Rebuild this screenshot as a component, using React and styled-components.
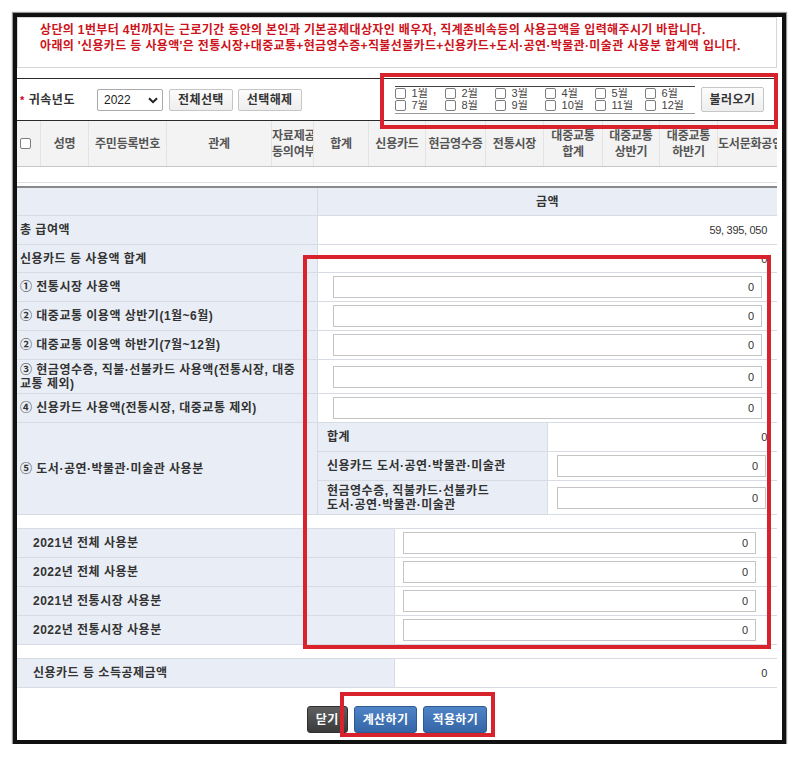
import React from "react";
import styled, { createGlobalStyle } from "styled-components";

const kr = `"Liberation Sans", "Noto Sans CJK KR", "Noto Sans", sans-serif`;
const num = `"Liberation Sans", Arial, sans-serif`;

const GlobalStyle = createGlobalStyle`
  html, body { margin: 0; padding: 0; background: #fff; }
  body { font-family: ${kr}; color: #333; }
  * { box-sizing: border-box; }
`;

const Frame = styled.div`
  position: relative;
  margin: 13px 0 0 13px;
  width: 773px;
  border: 4px solid #111;
  padding: 0 5px 7px 0;
  background: #fff;
  box-shadow: 0 0 1px 1px rgba(0, 0, 0, 0.4);
`;

const Notice = styled.div`
  height: 51px;
  border: 1px solid #d6d6d6;
  padding: 4px 0 0 22px;
  color: #cc1420;
  font: bold 12px/16px ${kr};
  letter-spacing: 0.35px;
  white-space: nowrap;
`;

const Toolbar = styled.div`
  margin-top: 10px;
  height: 43px;
  border-top: 1px solid #2b2b2b;
  border-bottom: 1px solid #2b2b2b;
  display: flex;
  align-items: center;
`;

const YearLabel = styled.label`
  width: 80px;
  padding-left: 3px;
  display: flex;
  align-items: center;
  gap: 4px;
  font: bold 12px/16px ${kr};
  letter-spacing: 0.5px;
  color: #333;
`;

const Star = styled.span`
  color: #d0021b;
  font-size: 11px;
`;

const SelectWrap = styled.div`
  position: relative;
  width: 66px;
  height: 22px;
`;

const YearSelect = styled.select`
  appearance: none;
  width: 100%;
  height: 100%;
  border: 1px solid #a9a9a9;
  border-radius: 2px;
  background: #fff;
  padding: 0 0 0 6px;
  font: 12px ${num};
  color: #222;
`;

const Chevron = styled.svg`
  position: absolute;
  right: 5px;
  top: 8px;
  pointer-events: none;
`;

const GreyButton = styled.button`
  height: ${(p) => (p.$tall ? 25 : 22)}px;
  margin-left: ${(p) => p.$gap}px;
  padding: 0 8px;
  border: 1px solid #c6c6c6;
  border-radius: 2px;
  background: linear-gradient(#fcfcfc, #eeeeee);
  font: bold 12px/1 ${kr};
  letter-spacing: 0.4px;
  color: #333;
`;

const MonthGrid = styled.div`
  margin-left: 93px;
  width: 300px;
  padding: 1px 0;
  border-top: 1px solid #444;
  border-bottom: 1px solid #9a9a9a;
  display: grid;
  grid-template-columns: repeat(6, 50px);
`;

const Month = styled.label`
  height: 12px;
  display: flex;
  align-items: center;
  overflow: hidden;
  font: 11px/11px ${kr};
  color: #444;
`;

const Box = styled.span`
  flex: none;
  width: 11px;
  height: 11px;
  margin-right: ${(p) => p.$gap ?? 6}px;
  border: 1px solid #7d7d7d;
  border-radius: 2px;
  background: #fff;
`;

const cols = [23, 48, 78, 105, 42, 55, 57, 60, 58, 59, 57, 58, 60];

const HeadRow = styled.div`
  display: grid;
  grid-template-columns: ${cols.map((c) => c + "px").join(" ")};
  height: 46px;
  background: #f3f3f3;
  border-bottom: 1px solid #c9c9c9;
`;

const HeadCell = styled.div`
  display: flex;
  flex-direction: column;
  justify-content: center;
  align-items: ${(p) => (p.$check ? "flex-start" : "stretch")};
  padding-left: ${(p) => (p.$check ? 3 : 0)}px;
  overflow: hidden;
  white-space: nowrap;
  text-align: center;
  border-left: ${(p) => (p.$check ? "none" : "1px solid #e3e3e3")};
  font: bold 12px/16px ${kr};
  letter-spacing: -0.2px;
  color: #555;
`;

const EmptyRow = styled.div`
  height: 16px;
  border-bottom: 1px solid #e0e0e0;
`;

const Table = styled.div`
  margin-top: 3px;
  border-top: 2px solid #8a8a8a;
`;

const Row = styled.div`
  display: grid;
  grid-template-columns: ${(p) => p.$label}px 1fr;
  height: ${(p) => p.$h}px;
  border-bottom: 1px solid #d7dce4;
`;

const Label = styled.div`
  display: flex;
  align-items: center;
  padding-left: ${(p) => p.$indent}px;
  background: #e9eef6;
  border-right: 1px solid #d7dce4;
  font: bold 12px/14px ${kr};
  letter-spacing: 0.5px;
  color: #333;
  white-space: nowrap;
`;

const HeadValue = styled.div`
  display: flex;
  align-items: center;
  justify-content: center;
  background: #e9eef6;
  font: bold 12px/14px ${kr};
  letter-spacing: 0.5px;
  color: #333;
`;

const Value = styled.div`
  display: flex;
  align-items: center;
  justify-content: ${(p) => (p.$input ? "flex-start" : "flex-end")};
  padding: 0 10px 0 ${(p) => p.$padL ?? 15}px;
  font: 11px ${num};
  letter-spacing: -0.3px;
  color: #333;
`;

const Amount = styled.input`
  width: ${(p) => p.$w}px;
  height: 22px;
  padding: 0 7px;
  border: 1px solid #c4c4c4;
  background: #fff;
  text-align: right;
  font: 11px ${num};
  color: #333;
`;

const SubStack = styled.div`
  display: flex;
  flex-direction: column;
`;

const SubRow = styled.div`
  display: grid;
  grid-template-columns: 230px 1fr;
  height: ${(p) => p.$h}px;
  border-bottom: ${(p) => (p.$last ? "none" : "1px solid #d7dce4")};
`;

const Spacer = styled.div`
  height: 14px;
  border-bottom: 1px solid #d7dce4;
`;

const Actions = styled.div`
  margin-top: 18px;
  display: flex;
  justify-content: center;
  gap: 6px;
`;

const ActionButton = styled.button`
  height: 27px;
  padding: 0 8px;
  border-radius: 3px;
  border: 1px solid ${(p) => (p.$dark ? "#2f2f2f" : "#2c5a93")};
  background: ${(p) =>
    p.$dark ? "linear-gradient(#606060, #3a3a3a)" : "linear-gradient(#4f84c6, #3465a7)"};
  color: #fff;
  font: bold 12px/1 ${kr};
  letter-spacing: 0.4px;
`;

const Highlight = styled.div`
  position: absolute;
  left: ${(p) => p.$x}px;
  top: ${(p) => p.$y}px;
  width: ${(p) => p.$w}px;
  height: ${(p) => p.$h}px;
  border: 4px solid #d8232c;
  pointer-events: none;
`;

const headers = [
  "",
  "성명",
  "주민등록번호",
  "관계",
  ["자료제공", "동의여부"],
  "합계",
  "신용카드",
  "현금영수증",
  "전통시장",
  ["대중교통", "합계"],
  ["대중교통", "상반기"],
  ["대중교통", "하반기"],
  "도서문화공연",
];

const mainRows = [
  { label: "① 전통시장 사용액", h: 29 },
  { label: "② 대중교통 이용액 상반기(1월~6월)", h: 29 },
  { label: "② 대중교통 이용액 하반기(7월~12월)", h: 29 },
  { label: ["③ 현금영수증, 직불·선불카드 사용액(전통시장, 대중", "교통 제외)"], h: 34 },
  { label: "④ 신용카드 사용액(전통시장, 대중교통 제외)", h: 29 },
];

const yearRows = ["2021년 전체 사용분", "2022년 전체 사용분", "2021년 전통시장 사용분", "2022년 전통시장 사용분"];

const lines = (t) =>
  Array.isArray(t)
    ? t.map((s, i) => (
        <React.Fragment key={i}>
          {i > 0 && <br />}
          {s}
        </React.Fragment>
      ))
    : t;

export default function App() {
  return (
    <>
      <GlobalStyle />
      <Frame>
        <Notice>
          상단의 1번부터 4번까지는 근로기간 동안의 본인과 기본공제대상자인 배우자, 직계존비속등의 사용금액을 입력해주시기 바랍니다.
          <br />
          아래의 '신용카드 등 사용액'은 전통시장+대중교통+현금영수증+직불선불카드+신용카드+도서·공연·박물관·미술관 사용분 합계액 입니다.
        </Notice>

        <Toolbar>
          <YearLabel>
            <Star>*</Star>귀속년도
          </YearLabel>
          <SelectWrap>
            <YearSelect defaultValue="2022">
              <option>2022</option>
              <option>2021</option>
            </YearSelect>
            <Chevron width="10" height="7" viewBox="0 0 10 7">
              <path d="M1 1.2l4 4 4-4" fill="none" stroke="#222" strokeWidth="2" />
            </Chevron>
          </SelectWrap>
          <GreyButton $gap={6}>전체선택</GreyButton>
          <GreyButton $gap={5}>선택해제</GreyButton>
          <MonthGrid>
            {Array.from({ length: 12 }, (_, i) => (
              <Month key={i}>
                <Box />
                {i + 1}월
              </Month>
            ))}
          </MonthGrid>
          <GreyButton $gap={6} $tall>
            불러오기
          </GreyButton>
        </Toolbar>

        <HeadRow>
          {headers.map((h, i) => (
            <HeadCell key={i} $check={i === 0}>
              {i === 0 ? <Box $gap={0} /> : lines(h)}
            </HeadCell>
          ))}
        </HeadRow>
        <EmptyRow />

        <Table>
          <Row $label={301} $h={28}>
            <Label $indent={3} />
            <HeadValue>금액</HeadValue>
          </Row>
          <Row $label={301} $h={29}>
            <Label $indent={3}>총 급여액</Label>
            <Value>59, 395, 050</Value>
          </Row>
          <Row $label={301} $h={28}>
            <Label $indent={3}>신용카드 등 사용액 합계</Label>
            <Value>0</Value>
          </Row>
          {mainRows.map((r, i) => (
            <Row key={i} $label={301} $h={r.h}>
              <Label $indent={3}>
                <div>{lines(r.label)}</div>
              </Label>
              <Value $input>
                <Amount $w={429} defaultValue="0" />
              </Value>
            </Row>
          ))}
          <Row $label={301} $h={92}>
            <Label $indent={3}>⑤ 도서·공연·박물관·미술관 사용분</Label>
            <SubStack>
              <SubRow $h={29}>
                <Label $indent={9}>합계</Label>
                <Value>0</Value>
              </SubRow>
              <SubRow $h={29}>
                <Label $indent={9}>신용카드 도서·공연·박물관·미술관</Label>
                <Value $input $padL={9}>
                  <Amount $w={209} defaultValue="0" />
                </Value>
              </SubRow>
              <SubRow $h={33} $last>
                <Label $indent={9}>
                  <div>{lines(["현금영수증, 직불카드·선불카드", "도서·공연·박물관·미술관"])}</div>
                </Label>
                <Value $input $padL={9}>
                  <Amount $w={209} defaultValue="0" />
                </Value>
              </SubRow>
            </SubStack>
          </Row>

          <Spacer />
          {yearRows.map((t) => (
            <Row key={t} $label={378} $h={29}>
              <Label $indent={16}>{t}</Label>
              <Value $input $padL={8}>
                <Amount $w={353} defaultValue="0" />
              </Value>
            </Row>
          ))}

          <Spacer />
          <Row $label={378} $h={29}>
            <Label $indent={16}>신용카드 등 소득공제금액</Label>
            <Value>0</Value>
          </Row>
        </Table>

        <Actions>
          <ActionButton $dark>닫기</ActionButton>
          <ActionButton>계산하기</ActionButton>
          <ActionButton>적용하기</ActionButton>
        </Actions>

        <Highlight $x={363} $y={56} $w={398} $h={56} />
        <Highlight $x={286} $y={238} $w={468} $h={394} />
        <Highlight $x={323} $y={675} $w={155} $h={45} />
      </Frame>
    </>
  );
}
